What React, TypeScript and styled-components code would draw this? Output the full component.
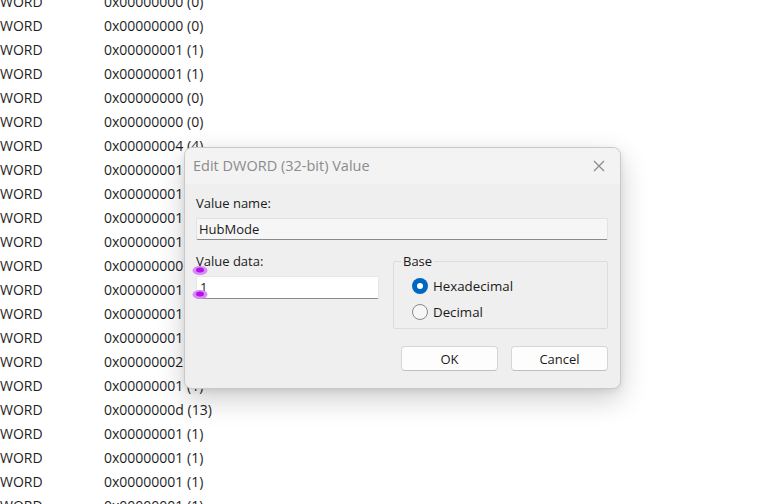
import React from "react";
import styled, { createGlobalStyle } from "styled-components";

const GlobalStyle = createGlobalStyle`
  html, body {
    margin: 0;
    padding: 0;
    background: #ffffff;
    overflow: hidden;
  }
  body {
    width: 768px;
    height: 504px;
    font-family: "Open Sans", "Noto Sans", "Liberation Sans", sans-serif;
  }
`;

const Page = styled.div`
  position: relative;
  width: 768px;
  height: 504px;
  overflow: hidden;
  background: #ffffff;
`;

const List = styled.div`
  display: flex;
  flex-direction: column;
  margin-top: -11px;
`;

const Row = styled.div`
  display: flex;
  align-items: center;
  height: 24px;
  font-size: 14px;
  color: #1e1e1e;
  white-space: nowrap;
`;

const TypeCell = styled.div`
  width: 104px;
`;

const ValueCell = styled.div``;

const Dialog = styled.div`
  position: absolute;
  left: 184px;
  top: 147px;
  width: 437px;
  height: 242px;
  box-sizing: border-box;
  border: 1px solid #c9c9c9;
  border-radius: 8px;
  background: #efefef;
  box-shadow: 0 10px 28px rgba(0, 0, 0, 0.2), 0 2px 6px rgba(0, 0, 0, 0.08);
  display: flex;
  flex-direction: column;
  overflow: hidden;
  font-family: "Open Sans", "Noto Sans", "Liberation Sans", sans-serif;
`;

const TitleBar = styled.div`
  height: 36px;
  flex-shrink: 0;
  display: flex;
  align-items: center;
  justify-content: space-between;
  padding: 0 14px 0 8px;
  background: #f3f3f3;
`;

const Title = styled.div`
  font-size: 14.5px;
  color: #8b8b8b;
  margin-top: -1px;
`;

const CloseButton = styled.div`
  width: 14px;
  height: 14px;
  display: flex;
  align-items: center;
  justify-content: center;
`;

const Body = styled.div`
  padding: 11px 12px 0 11px;
  display: flex;
  flex-direction: column;
`;

const Label = styled.div`
  font-size: 13px;
  line-height: 16px;
  color: #1a1a1a;
`;

const NameField = styled.div`
  margin-top: 7px;
  height: 22px;
  box-sizing: border-box;
  border: 1px solid #e2e2e2;
  border-bottom-color: #8a8a8a;
  background: #f6f6f6;
  border-radius: 2px;
  font-size: 13px;
  line-height: 20px;
  padding-left: 2px;
  color: #1a1a1a;
`;

const DataRow = styled.div`
  display: flex;
  justify-content: space-between;
  margin-top: 13px;
`;

const DataColumn = styled.div`
  position: relative;
  width: 183px;
  display: flex;
  flex-direction: column;
`;

const DataInput = styled.div`
  margin-top: 7px;
  height: 23px;
  box-sizing: border-box;
  border: 1px solid #e6e6e6;
  border-bottom-color: #8a8a8a;
  background: #ffffff;
  border-radius: 2px;
  font-size: 13px;
  line-height: 21px;
  padding-left: 3px;
  color: #1a1a1a;
`;

const Handle = styled.svg<{ $top: number }>`
  position: absolute;
  left: -4px;
  top: ${(p) => p.$top}px;
`;

const GroupBox = styled.fieldset`
  width: 215px;
  height: 76px;
  box-sizing: border-box;
  margin: 0;
  padding: 7px 0 0 18px;
  border: 1px solid #dcdcdc;
  border-radius: 2px;
  display: flex;
  flex-direction: column;
  gap: 6px;
`;

const Legend = styled.legend`
  font-size: 13px;
  line-height: 16px;
  padding: 0 2px;
  margin-left: -11px;
  color: #1a1a1a;
`;

const RadioRow = styled.div`
  display: flex;
  align-items: center;
  gap: 5px;
  height: 20px;
  font-size: 13.3px;
  color: #1a1a1a;
`;

const RadioDot = styled.div<{ $checked?: boolean }>`
  width: 16px;
  height: 16px;
  box-sizing: border-box;
  border-radius: 50%;
  background: ${(p) => (p.$checked ? "#0067c0" : "#f6f6f6")};
  border: ${(p) => (p.$checked ? "none" : "1px solid #8a8a8a")};
  display: flex;
  align-items: center;
  justify-content: center;
  &::after {
    content: "";
    display: ${(p) => (p.$checked ? "block" : "none")};
    width: 6px;
    height: 6px;
    border-radius: 50%;
    background: #ffffff;
  }
`;

const ButtonRow = styled.div`
  display: flex;
  justify-content: flex-end;
  gap: 13px;
  margin-top: 17px;
`;

const Button = styled.div`
  width: 97px;
  height: 25px;
  box-sizing: border-box;
  border: 1px solid #d6d6d6;
  border-bottom-color: #c0c0c0;
  border-radius: 4px;
  background: #fdfdfd;
  font-size: 13px;
  display: flex;
  align-items: center;
  justify-content: center;
  color: #1a1a1a;
`;

const rows = [
  "0x00000000 (0)",
  "0x00000000 (0)",
  "0x00000001 (1)",
  "0x00000001 (1)",
  "0x00000000 (0)",
  "0x00000000 (0)",
  "0x00000004 (4)",
  "0x00000001 (1)",
  "0x00000001 (1)",
  "0x00000001 (1)",
  "0x00000001 (1)",
  "0x00000000 (0)",
  "0x00000001 (1)",
  "0x00000001 (1)",
  "0x00000001 (1)",
  "0x00000002 (2)",
  "0x00000001 (1)",
  "0x0000000d (13)",
  "0x00000001 (1)",
  "0x00000001 (1)",
  "0x00000001 (1)",
  "0x00000001 (1)",
];

function SelectionHandle({ top }: { top: number }) {
  return (
    <Handle $top={top} width="16" height="11" viewBox="0 0 16 11">
      <ellipse cx="8" cy="5.5" rx="7.5" ry="4.5" fill="#d98af7" />
      <ellipse cx="8" cy="5" rx="4" ry="2.5" fill="#b412e6" />
    </Handle>
  );
}

export default function App() {
  return (
    <Page>
      <GlobalStyle />
      <List>
        {rows.map((v, i) => (
          <Row key={i}>
            <TypeCell>WORD</TypeCell>
            <ValueCell>{v}</ValueCell>
          </Row>
        ))}
      </List>

      <Dialog>
        <TitleBar>
          <Title>Edit DWORD (32-bit) Value</Title>
          <CloseButton>
            <svg width="12" height="12" viewBox="0 0 12 12">
              <path d="M1 1 L11 11 M11 1 L1 11" stroke="#8a8a8a" strokeWidth="1.2" />
            </svg>
          </CloseButton>
        </TitleBar>
        <Body>
          <Label>Value name:</Label>
          <NameField>HubMode</NameField>
          <DataRow>
            <DataColumn>
              <Label>Value data:</Label>
              <DataInput>1</DataInput>
              <SelectionHandle top={12} />
              <SelectionHandle top={36} />
            </DataColumn>
            <GroupBox>
              <Legend>Base</Legend>
              <RadioRow>
                <RadioDot $checked />
                Hexadecimal
              </RadioRow>
              <RadioRow>
                <RadioDot />
                Decimal
              </RadioRow>
            </GroupBox>
          </DataRow>
          <ButtonRow>
            <Button>OK</Button>
            <Button>Cancel</Button>
          </ButtonRow>
        </Body>
      </Dialog>
    </Page>
  );
}
